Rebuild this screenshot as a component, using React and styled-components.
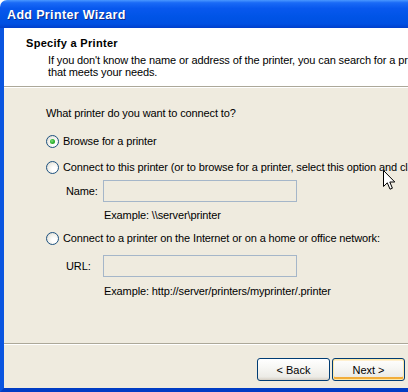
import React from "react";
import styled, { createGlobalStyle } from "styled-components";

const GlobalStyle = createGlobalStyle`
  html, body {
    margin: 0;
    padding: 0;
    background: #ffffff;
    overflow: hidden;
  }
  body {
    font-family: "Liberation Sans", Arial, sans-serif;
    font-size: 11px;
    letter-spacing: -0.12px;
    color: #000;
  }
`;

const Window = styled.div`
  position: relative;
  width: 504px;
  height: 392px;
  display: flex;
  flex-direction: column;
`;

const TitleBar = styled.div`
  height: 28px;
  flex-shrink: 0;
  display: flex;
  align-items: center;
  padding: 0 0 0 7px;
  border-radius: 7px 7px 0 0;
  background: linear-gradient(
    to bottom,
    #4a98ff 0%,
    #1a6af6 10%,
    #0858ee 30%,
    #0054e6 60%,
    #0050e2 85%,
    #003fcb 100%
  );
`;

const TitleText = styled.span`
  font-family: "Liberation Sans", Arial, sans-serif;
  font-weight: bold;
  font-size: 12.5px;
  letter-spacing: 0.35px;
  color: #fff;
  text-shadow: 1px 1px 0 #0a2c8c;
  margin-top: 1px;
`;

const Frame = styled.div`
  flex: 1;
  display: flex;
  flex-direction: column;
  border-left: 4px solid #0a55e0;
  border-right: 4px solid #0a55e0;
  border-bottom: 4px solid #003cc4;
  background: #efebdf;
  min-height: 0;
`;

const Header = styled.div`
  height: 58px;
  flex-shrink: 0;
  background: #fff;
  padding: 9px 0 0 22px;
  box-sizing: border-box;
  white-space: nowrap;
`;

const HeaderTitle = styled.div`
  font-weight: bold;
  font-size: 11px;
  letter-spacing: 0.3px;
  line-height: 13px;
`;

const HeaderText = styled.div`
  padding-left: 22px;
  margin-top: 4px;
  line-height: 12px;
`;

const Rule = styled.div`
  height: 1px;
  flex-shrink: 0;
  background: #aca899;
  border-bottom: 1px solid #fff;
`;

const Body = styled.div`
  flex: 1;
  padding: 18px 0 0 42px;
  white-space: nowrap;
  overflow: hidden;
  display: flex;
  flex-direction: column;
  align-items: flex-start;
`;

const Question = styled.div`
  line-height: 14px;
  margin-bottom: ${(p) => p.$gap || 0}px;
`;

const RadioRow = styled.label`
  display: flex;
  align-items: center;
  gap: 4px;
  height: 16px;
  margin-top: ${(p) => p.$top || 0}px;
`;

const RadioCircle = styled.span`
  position: relative;
  width: 13px;
  height: 13px;
  box-sizing: border-box;
  border-radius: 50%;
  border: 1px solid #1c5180;
  background: radial-gradient(circle at 65% 65%, #ffffff 20%, #f1f0ea 55%, #d2d0c6 100%);
  flex-shrink: 0;

  &::after {
    content: "";
    display: ${(p) => (p.$checked ? "block" : "none")};
    position: absolute;
    left: 3px;
    top: 3px;
    width: 5px;
    height: 5px;
    border-radius: 50%;
    background: radial-gradient(circle at 40% 40%, #7ee07e 0%, #2fb32f 50%, #1c8c1c 100%);
  }
`;

const FieldRow = styled.div`
  display: flex;
  align-items: center;
  margin-top: ${(p) => p.$top || 0}px;
  padding-left: 20px;
`;

const FieldLabel = styled.span`
  width: 37px;
`;

const TextBox = styled.input`
  width: 194px;
  height: 22px;
  box-sizing: border-box;
  border: 1px solid #a5b6c9;
  background: #efebdf;
  padding: 0 3px;
  margin: 0;
  font: inherit;
`;

const Hint = styled.div`
  line-height: 14px;
  margin-top: ${(p) => p.$top || 0}px;
  padding-left: 58px;
`;

const Footer = styled.div`
  height: 43px;
  flex-shrink: 0;
  display: flex;
  justify-content: flex-end;
  align-items: flex-start;
  padding: 13px 95px 0 0;
  box-sizing: border-box;
`;

const Button = styled.button`
  width: 73px;
  height: 23px;
  margin-left: ${(p) => p.$gap || 0}px;
  border: 1px solid #003c74;
  border-radius: 3px;
  background: linear-gradient(to bottom, #ffffff 0%, #f7f7f4 40%, #ecebe6 85%, #d6d0c5 100%);
  font-family: "Liberation Sans", Arial, sans-serif;
  font-size: 11px;
  color: #000;
  padding: 0;
  box-shadow: ${(p) =>
    p.$default
      ? "inset 0 0 0 1px #fde9a8, inset 0 -2px 0 1px #f2ad3a, inset 0 1px 0 1px #fff0cf"
      : "none"};
`;

const Cursor = styled.svg`
  position: absolute;
  left: 383px;
  top: 170px;
  width: 13px;
  height: 21px;
`;

export default function App() {
  return (
    <>
      <GlobalStyle />
      <Window>
        <TitleBar>
          <TitleText>Add Printer Wizard</TitleText>
        </TitleBar>
        <Frame>
          <Header>
            <HeaderTitle>Specify a Printer</HeaderTitle>
            <HeaderText>
              If you don't know the name or address of the printer, you can search for a printer
              <br />
              that meets your needs.
            </HeaderText>
          </Header>
          <Rule />
          <Body>
            <Question $gap={13}>What printer do you want to connect to?</Question>

            <RadioRow>
              <RadioCircle $checked />
              Browse for a printer
            </RadioRow>

            <RadioRow $top={10}>
              <RadioCircle />
              Connect to this printer (or to browse for a printer, select this option and click Next):
            </RadioRow>
            <FieldRow $top={5}>
              <FieldLabel>Name:</FieldLabel>
              <TextBox disabled />
            </FieldRow>
            <Hint $top={6}>Example: \\server\printer</Hint>

            <RadioRow $top={8}>
              <RadioCircle />
              Connect to a printer on the Internet or on a home or office network:
            </RadioRow>
            <FieldRow $top={9}>
              <FieldLabel>URL:</FieldLabel>
              <TextBox disabled />
            </FieldRow>
            <Hint $top={7}>Example: http://server/printers/myprinter/.printer</Hint>
          </Body>
          <Rule />
          <Footer>
            <Button>&lt; Back</Button>
            <Button $default $gap={2}>Next &gt;</Button>
          </Footer>
        </Frame>
        <Cursor viewBox="0 0 13 21">
          <path
            d="M0.5 0.5 L0.5 16.5 L4.3 12.8 L7 19.2 L9.4 18.2 L6.8 12 L11.8 12 Z"
            fill="#fff"
            stroke="#000"
            strokeWidth="1"
            strokeLinejoin="miter"
          />
        </Cursor>
      </Window>
    </>
  );
}
